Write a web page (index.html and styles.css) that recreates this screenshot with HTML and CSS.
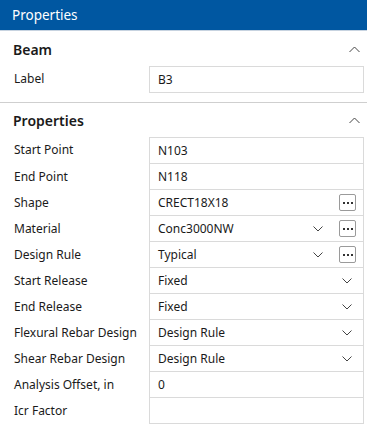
FILE: index.html
```html
<!doctype html>
<html lang="en">
<head>
    <meta charset="UTF-8">
    <title>Properties</title>
    <link rel="stylesheet" href="styles.css">
</head>
<body>
    <div class="panel-title">Properties</div>

    <!-- Beam section -->
    <div class="section top">
        <div class="section-head">
            <span>Beam</span>
            <svg class="caret" width="11" height="7" viewBox="0 0 11 7"><polyline points="0.5,6 5.5,1 10.5,6" /></svg>
        </div>
        <div class="grid">
            <div class="label">Label</div>
            <div class="field first">B3</div>
        </div>
    </div>

    <!-- Properties section -->
    <div class="section bordered">
        <div class="section-head">
            <span>Properties</span>
            <svg class="caret" width="11" height="7" viewBox="0 0 11 7"><polyline points="0.5,6 5.5,1 10.5,6" /></svg>
        </div>
        <div class="grid">
            <div class="label">Start Point</div>
            <div class="field first">N103</div>

            <div class="label">End Point</div>
            <div class="field">N118</div>

            <div class="label">Shape</div>
            <div class="field">
                <span class="value">CRECT18X18</span>
                <span class="more"><i></i><i></i><i></i></span>
            </div>

            <div class="label">Material</div>
            <div class="field">
                <span class="value">Conc3000NW</span>
                <svg class="drop" width="10" height="6" viewBox="0 0 10 6"><polyline points="0.5,0.5 5,5 9.5,0.5" /></svg>
                <span class="more"><i></i><i></i><i></i></span>
            </div>

            <div class="label">Design Rule</div>
            <div class="field">
                <span class="value">Typical</span>
                <svg class="drop" width="10" height="6" viewBox="0 0 10 6"><polyline points="0.5,0.5 5,5 9.5,0.5" /></svg>
                <span class="more"><i></i><i></i><i></i></span>
            </div>

            <div class="label">Start Release</div>
            <div class="field">
                <span class="value">Fixed</span>
                <svg class="drop solo" width="10" height="6" viewBox="0 0 10 6"><polyline points="0.5,0.5 5,5 9.5,0.5" /></svg>
            </div>

            <div class="label">End Release</div>
            <div class="field">
                <span class="value">Fixed</span>
                <svg class="drop solo" width="10" height="6" viewBox="0 0 10 6"><polyline points="0.5,0.5 5,5 9.5,0.5" /></svg>
            </div>

            <div class="label">Flexural Rebar Design</div>
            <div class="field">
                <span class="value">Design Rule</span>
                <svg class="drop solo" width="10" height="6" viewBox="0 0 10 6"><polyline points="0.5,0.5 5,5 9.5,0.5" /></svg>
            </div>

            <div class="label">Shear Rebar Design</div>
            <div class="field">
                <span class="value">Design Rule</span>
                <svg class="drop solo" width="10" height="6" viewBox="0 0 10 6"><polyline points="0.5,0.5 5,5 9.5,0.5" /></svg>
            </div>

            <div class="label">Analysis Offset, in</div>
            <div class="field">0</div>

            <div class="label">Icr Factor</div>
            <div class="field"></div>
        </div>
    </div>
</body>
</html>
```

FILE: styles.css
```css
body {
    margin: 0;
    font-family: "Noto Sans", sans-serif;
    font-size: 12px;
    color: #1a1a1a;
    background: #fff;
}
.panel-title {
    height: 30px;
    line-height: 30px;
    padding-left: 12px;
    background: #0057a1;
    color: #fff;
    font-size: 13.5px;
    border-bottom: 1px solid #c7d3e0;
}
.section.top {
    padding-top: 1px;
    padding-bottom: 9px;
}
.section.bordered {
    border-top: 1px solid #cfcfcf;
}
.section-head {
    display: flex;
    align-items: center;
    justify-content: space-between;
    height: 34px;
    padding: 1px 7px 0 13px;
    box-sizing: border-box;
    font-size: 14px;
    font-weight: 600;
    color: #1a1a1a;
}
.caret polyline,
.drop polyline {
    fill: none;
    stroke: #444;
    stroke-width: 1;
}
.grid {
    display: grid;
    grid-template-columns: 149px 215px;
}
.label {
    height: 26px;
    line-height: 26px;
    padding-left: 14px;
}
.field {
    display: flex;
    align-items: center;
    height: 25px;
    margin-top: -1px;
    padding: 0 7px 0 8px;
    border: 1px solid #dadada;
}
.field.first {
    margin-top: 0;
}
.value {
    flex: 1;
}
.drop {
    margin-right: 16px;
}
.drop.solo {
    margin-right: 4px;
}
.more {
    display: flex;
    align-items: center;
    justify-content: center;
    gap: 2px;
    width: 15px;
    height: 15px;
    border: 1px solid #9a9a9a;
    border-radius: 2px;
}
.more i {
    width: 2px;
    height: 2px;
    background: #333;
}
```
